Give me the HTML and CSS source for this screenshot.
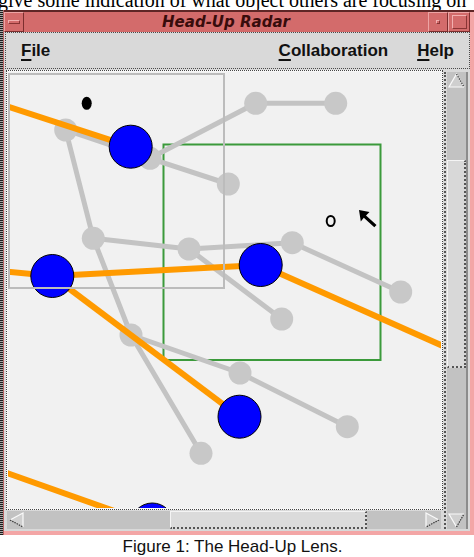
FILE: index.html
```html
<!DOCTYPE html>
<html>
<head>
<meta charset="utf-8">
<title>Head-Up Radar</title>
<link rel="stylesheet" href="styles.css">
</head>
<body>
<div class="para"><div class="para-line">give some indication of what object others are focusing on</div></div>
<div class="window">
  <div class="hatch"></div>
  <div class="frame">
    <div class="titlebar">
      <div class="tbtn tbtn-menu"><span class="bar"></span></div>
      <div class="title">Head-Up Radar</div>
      <div class="tbtn tbtn-min"><span class="dot"></span></div>
      <div class="tbtn tbtn-max"><span class="sq"></span></div>
    </div>
    <div class="client">
      <div class="menubar">
        <span class="menu"><u>F</u>ile</span>
        <span class="menu menu-collab"><u>C</u>ollaboration</span>
        <span class="menu menu-help"><u>H</u>elp</span>
      </div>
      <div class="main">
        <div class="leftcol">
          <div class="canvas-wrap">
            <svg class="radar" width="433" height="436" viewBox="8 72 433 436">
              <rect x="8" y="72" width="433" height="436" fill="#f1f1f1"/>
              <rect x="163.5" y="144.5" width="217" height="215.5" fill="none" stroke="#3b9a3b" stroke-width="2"/>
              <g stroke="#c3c3c3" stroke-width="5" stroke-linecap="round">
                <line x1="255.7" y1="103.3" x2="335.7" y2="103.3"/>
                <line x1="255.7" y1="103.3" x2="150" y2="158.3"/>
                <line x1="65.7" y1="130" x2="150" y2="158.3"/>
                <line x1="150" y1="158.3" x2="228.3" y2="184"/>
                <line x1="65.7" y1="130" x2="93.3" y2="238.3"/>
                <line x1="93.3" y1="238.3" x2="189" y2="249"/>
                <line x1="189" y1="249" x2="292.3" y2="242.7"/>
                <line x1="292.3" y1="242.7" x2="400.7" y2="292"/>
                <line x1="189" y1="249" x2="281.7" y2="319"/>
                <line x1="93.3" y1="238.3" x2="131" y2="335"/>
                <line x1="131" y1="335" x2="201" y2="453.3"/>
                <line x1="131" y1="335" x2="240" y2="373"/>
                <line x1="240" y1="373" x2="347.3" y2="426.7"/>
              </g>
              <g fill="#c8c8c8">
                <circle cx="255.7" cy="103.3" r="11.5"/>
                <circle cx="335.7" cy="103.3" r="11.5"/>
                <circle cx="65.7" cy="130" r="11.5"/>
                <circle cx="150" cy="158.3" r="11.5"/>
                <circle cx="228.3" cy="184" r="11.5"/>
                <circle cx="93.3" cy="238.3" r="11.5"/>
                <circle cx="189" cy="249" r="11.5"/>
                <circle cx="292.3" cy="242.7" r="11.5"/>
                <circle cx="400.7" cy="292" r="11.5"/>
                <circle cx="281.7" cy="319" r="11.5"/>
                <circle cx="131" cy="335" r="11.5"/>
                <circle cx="240" cy="373" r="11.5"/>
                <circle cx="347.3" cy="426.7" r="11.5"/>
                <circle cx="201" cy="453.3" r="11.5"/>
              </g>
              <g stroke="#ff9a00" stroke-width="6">
                <line x1="0" y1="104" x2="130.7" y2="146.7"/>
                <line x1="0" y1="271" x2="52.3" y2="276"/>
                <line x1="52.3" y1="276" x2="260.7" y2="265"/>
                <line x1="260.7" y1="265" x2="470" y2="358"/>
                <line x1="52.3" y1="276" x2="239.5" y2="416.7"/>
                <line x1="0" y1="470.5" x2="152.3" y2="524.5"/>
              </g>
              <g fill="#0000ff" stroke="#000" stroke-width="1">
                <circle cx="130.7" cy="146.7" r="21.5"/>
                <circle cx="52.3" cy="276" r="21.5"/>
                <circle cx="260.7" cy="265" r="21.5"/>
                <circle cx="239.5" cy="416.7" r="21.5"/>
                <circle cx="152.3" cy="524.5" r="21.5"/>
              </g>
              <ellipse cx="86.7" cy="103.3" rx="5" ry="6.5" fill="#000"/>
              <ellipse cx="330.7" cy="221" rx="4" ry="5" fill="none" stroke="#000" stroke-width="2"/>
              <path d="M359 210 L369.5 212 L366 215.5 L376.5 225 L374.3 227.3 L363.8 217.8 L360.8 221.5 Z" fill="#000"/>
              <rect x="9" y="74" width="215" height="214" fill="none" stroke="#bcbcbc" stroke-width="2"/>
            </svg>
          </div>
          <div class="hscroll">
            <div class="harrow">
              <svg width="19" height="18" viewBox="0 0 19 18">
                <polygon points="3,9 16,2 16,16" fill="#cfcfcf"/>
                <polyline points="3,9 16,2 16,16" fill="none" stroke="#fafafa" stroke-width="1.2"/>
                <line x1="3" y1="9" x2="16" y2="16" stroke="#3a3a3a" stroke-width="1.2" stroke-dasharray="1.5 1"/>
              </svg>
            </div>
            <div class="hgap"></div>
            <div class="hthumb"></div>
            <div class="hrest"></div>
            <div class="harrow harrow-r">
              <svg width="16" height="18" viewBox="0 0 16 18">
                <polygon points="14,9 1,2 1,16" fill="#cfcfcf"/>
                <polyline points="14,9 1,2 1,16" fill="none" stroke="#fafafa" stroke-width="1.2"/>
                <line x1="14" y1="9" x2="1" y2="16" stroke="#3a3a3a" stroke-width="1.2" stroke-dasharray="1.5 1"/>
              </svg>
            </div>
          </div>
        </div>
        <div class="vscroll">
          <div class="varrow">
            <svg width="19" height="17" viewBox="0 0 19 17">
              <polygon points="9.5,2 2,15 17,15" fill="#cfcfcf"/>
              <polyline points="17,15 9.5,2 2,15 17,15" fill="none" stroke="#fafafa" stroke-width="1.2"/>
              <line x1="9.5" y1="2" x2="17" y2="15" stroke="#3a3a3a" stroke-width="1.2" stroke-dasharray="1.5 1"/>
            </svg>
          </div>
          <div class="vgap"></div>
          <div class="vthumb"></div>
          <div class="vrest"></div>
          <div class="varrow">
            <svg width="19" height="17" viewBox="0 0 19 17">
              <polygon points="9.5,15 2,2 17,2" fill="#cfcfcf"/>
              <polyline points="9.5,15 2,2 17,2" fill="none" stroke="#fafafa" stroke-width="1.2"/>
              <line x1="9.5" y1="15" x2="17" y2="2" stroke="#3a3a3a" stroke-width="1.2" stroke-dasharray="1.5 1"/>
            </svg>
          </div>
        </div>
      </div>
    </div>
  </div>
</div>
<div class="caption">Figure 1: The Head-Up Lens.</div>
</body>
</html>
```
FILE: styles.css
```css
* { box-sizing: border-box; }
html, body { margin: 0; padding: 0; }
body {
  width: 474px;
  height: 557px;
  overflow: hidden;
  background: #ffffff;
  font-family: "Liberation Sans", Arial, sans-serif;
  color: #000;
}

.para { height: 10px; overflow: hidden; }
.para-line {
  margin-top: -10px;
  margin-left: -2px;
  font-family: "Liberation Serif", "Times New Roman", serif;
  font-size: 20px;
  line-height: 20px;
  white-space: nowrap;
}

.window { display: flex; height: 525px; }
.hatch {
  width: 4px;
  background: repeating-linear-gradient(180deg, #1e1e1e 0 1px, #a4a4a4 1px 2px);
  border-right: 1px solid #b86464;
}
.frame {
  flex: 1;
  display: flex;
  flex-direction: column;
  background: #f3a6a6;
  border-top: 2px solid #5e2626;
  padding: 0 4px 4px 0;
}

.titlebar { height: 20px; display: flex; background: #d36b6b; }
.tbtn {
  width: 20px;
  height: 20px;
  display: flex;
  align-items: center;
  justify-content: center;
  border-top: 1px solid #eda4a4;
  border-left: 1px solid #eda4a4;
  border-right: 1px solid #7c2e2e;
  border-bottom: 1px solid #7c2e2e;
}
.tbtn-max { width: 22px; }
.bar {
  width: 12px;
  height: 4px;
  border-top: 1px solid #f2b0b0;
  border-left: 1px solid #f2b0b0;
  border-right: 1px solid #8a3434;
  border-bottom: 1px solid #8a3434;
}
.dot {
  width: 4px;
  height: 4px;
  border-top: 1px solid #f2b0b0;
  border-left: 1px solid #f2b0b0;
  border-right: 1px solid #8a3434;
  border-bottom: 1px solid #8a3434;
}
.sq {
  width: 15px;
  height: 14px;
  border-top: 1px solid #f2b0b0;
  border-left: 1px solid #f2b0b0;
  border-right: 1px solid #8a3434;
  border-bottom: 1px solid #8a3434;
}
.title {
  flex: 1;
  text-align: center;
  font-family: "DejaVu Sans", Verdana, sans-serif;
  font-style: italic;
  font-weight: bold;
  font-size: 15px;
  line-height: 19px;
  padding-top: 1px;
  color: #380c0c;
}

.client {
  flex: 1;
  display: flex;
  flex-direction: column;
  background: #d9d9d9;
}
.menubar {
  margin-left: 1px;
  height: 37px;
  border: 1px dotted #4a4a4a;
  display: flex;
  align-items: center;
  padding: 1px 15px 0 15px;
  font-weight: bold;
  font-size: 17px;
  line-height: 20px;
  color: #111;
}
.menu u {
  text-decoration-thickness: 2px;
  text-underline-offset: 3px;
}
.menu-collab { margin-left: auto; }
.menu-help { margin-left: 29px; }

.main { flex: 1; display: flex; padding-left: 2px; }
.leftcol { width: 437px; display: flex; flex-direction: column; }
.canvas-wrap {
  margin-top: 1px;
  height: 440px;
  border: 1px dotted #444;
  padding: 1px;
  background: #f7f7f7;
}
.radar { display: block; }

.hscroll {
  margin-top: 1px;
  margin-left: 1px;
  width: 434px;
  height: 18px;
  display: flex;
  background: #c2c2c2;
}
.harrow { width: 19px; height: 18px; }
.harrow-r { width: 16px; }
.harrow svg, .varrow svg { display: block; }
.hgap { width: 144px; }
.hthumb {
  width: 197px;
  background: #dbdbdb;
  border-top: 1px solid #f4f4f4;
  border-left: 1px solid #f4f4f4;
  border-right: 2px dotted #555;
  border-bottom: 2px dotted #555;
}
.hrest { flex: 1; }

.vscroll {
  margin-top: 3px;
  margin-left: 1px;
  width: 24px;
  height: 457px;
  display: flex;
  flex-direction: column;
  border-left: 2px dotted #555;
  padding-left: 1px;
  border-right: 2px solid #8c8c8c;
  background: #c2c2c2;
  background-clip: content-box;
}
.varrow { height: 17px; }
.vgap { height: 71px; }
.vthumb {
  height: 208px;
  background: #d8d8d8;
  border-top: 1px solid #f4f4f4;
  border-left: 1px solid #f4f4f4;
  border-right: 2px dotted #555;
  border-bottom: 2px dotted #555;
}
.vrest { flex: 1; }

.caption {
  font-size: 17px;
  line-height: 23px;
  text-align: center;
  padding-right: 9px;
  color: #111;
}
```
